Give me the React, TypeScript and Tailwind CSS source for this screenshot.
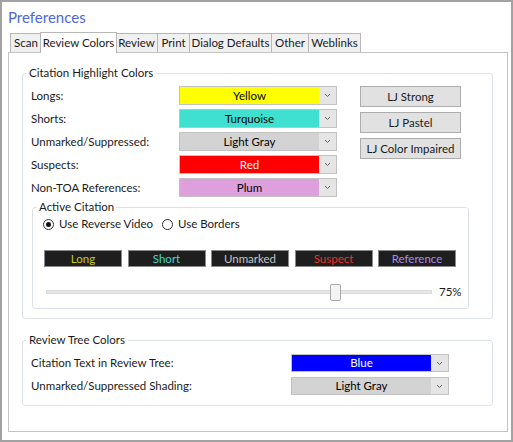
import type { JSX } from 'react'

const font = { fontFamily: '"Segoe UI", Lato, "Noto Sans", sans-serif' }

type Tab = { name: string; w: string }
const tabs: Tab[] = [
  { name: 'Scan', w: 'w-[31px]' },
  { name: 'Review Colors', w: 'w-[77px]' },
  { name: 'Review', w: 'w-[41px]' },
  { name: 'Print', w: 'w-[32px]' },
  { name: 'Dialog Defaults', w: 'w-[82px]' },
  { name: 'Other', w: 'w-[37px]' },
  { name: 'Weblinks', w: 'w-[53px]' },
]

type Choice = { label: string; value: string; bg: string; fg: string }
const highlight: Choice[] = [
  { label: 'Longs:', value: 'Yellow', bg: 'bg-[#ffff00]', fg: 'text-black' },
  { label: 'Shorts:', value: 'Turquoise', bg: 'bg-[#40e0d0]', fg: 'text-black' },
  { label: 'Unmarked/Suppressed:', value: 'Light Gray', bg: 'bg-[#d3d3d3]', fg: 'text-black' },
  { label: 'Suspects:', value: 'Red', bg: 'bg-[#ff0000]', fg: 'text-white' },
  { label: 'Non-TOA References:', value: 'Plum', bg: 'bg-[#dda0dd]', fg: 'text-black' },
]

const swatches = [
  { name: 'Long', fg: 'text-[#c9c912]' },
  { name: 'Short', fg: 'text-[#3fd8c8]' },
  { name: 'Unmarked', fg: 'text-[#c4c4c4]' },
  { name: 'Suspect', fg: 'text-[#e8302c]' },
  { name: 'Reference', fg: 'text-[#a98ee6]' },
]

function Chevron(): JSX.Element {
  return (
    <svg width="7" height="5" viewBox="0 0 7 5" fill="none">
      <path d="M1 1l2.5 2.5L6 1" stroke="#606060" strokeWidth="1" />
    </svg>
  )
}

function ColorSelect({ value, bg, fg, h = 'h-[19px]' }: { value: string; bg: string; fg: string; h?: string }): JSX.Element {
  return (
    <div className={`flex w-[158px] ${h} border border-[#c2c2c2] bg-[#e5e5e5]`}>
      <div className={`flex-1 flex items-center justify-center ${bg} ${fg} leading-none`}>{value}</div>
      <div className="w-[17px] flex items-center justify-center">
        <Chevron />
      </div>
    </div>
  )
}

function Radio({ checked, label }: { checked: boolean; label: string }): JSX.Element {
  return (
    <div className="flex items-center gap-[5px]">
      <span className="w-[11px] h-[11px] rounded-full border border-[#333] bg-white flex items-center justify-center">
        {checked && <span className="w-[5px] h-[5px] rounded-full bg-[#111]" />}
      </span>
      <span>{label}</span>
    </div>
  )
}

export default function App(): JSX.Element {
  return (
    <div
      className="w-[513px] h-[442px] bg-white border-2 border-[#a2a2a2] text-[11.5px] leading-4 text-[#1a1a1a] overflow-hidden whitespace-nowrap"
      style={font}
    >
      {/* Title */}
      <div className="pt-[4px] pl-[6px] h-[27px] text-[15px] leading-[22px] text-[#4f67d8]">Preferences</div>

      {/* Tabs */}
      <div className="flex items-end h-[21px] ml-[8px] mt-[3px]">
        {tabs.map((t, i) => {
          const active = t.name === 'Review Colors'
          const prevActive = i > 0 && tabs[i - 1].name === 'Review Colors'
          return (
            <div
              key={t.name}
              className={`${t.w} flex items-center justify-center border-t border-[#b7b7b7] ${
                active
                  ? 'relative z-10 h-[21px] bg-white border-l border-r -mx-[1px] px-[1px]'
                  : `h-[19px] mb-[1px] bg-[#f0f0f0] ${prevActive ? '' : 'border-l'} ${i === tabs.length - 1 ? 'border-r' : ''}`
              }`}
            >
              {t.name}
            </div>
          )
        })}
      </div>

      {/* Panel */}
      <div className="ml-[6px] -mt-[1px] w-[500px] h-[380px] border border-[#c4c4c4] pt-[12px] pl-[13px]">
        {/* Citation Highlight Colors */}
        <fieldset className="w-[471px] border border-[#dde2e8] rounded-[3px] pb-[9px]">
          <legend className="ml-[3px] px-[3px]">Citation Highlight Colors</legend>
          <div className="flex pt-[5px] pl-[8px]">
            <div className="flex flex-col gap-[4px]">
              {highlight.map(c => (
                <div key={c.label} className="flex items-center h-[19px]">
                  <div className="w-[148px]">{c.label}</div>
                  <ColorSelect value={c.value} bg={c.bg} fg={c.fg} />
                </div>
              ))}
            </div>
            <div className="ml-[23px] flex flex-col gap-[5px]">
              {['LJ Strong', 'LJ Pastel', 'LJ Color Impaired'].map(b => (
                <button
                  key={b}
                  className="w-[101px] h-[21px] bg-[#e1e1e1] border border-[#adadad] flex items-center justify-center"
                >
                  {b}
                </button>
              ))}
            </div>
          </div>

          {/* Active Citation */}
          <fieldset className="ml-[9px] mt-[2px] w-[437px] border border-[#dde2e8] rounded-[3px] pb-[8px]">
            <legend className="ml-[4px] px-[2px]">Active Citation</legend>
            <div className="flex items-center h-[16px] mt-[1px] pl-[10px]">
              <div className="w-[119px]">
                <Radio checked label="Use Reverse Video" />
              </div>
              <Radio checked={false} label="Use Borders" />
            </div>
            <div className="flex gap-[5.5px] mt-[18px] pl-[11px]">
              {swatches.map(s => (
                <div
                  key={s.name}
                  className={`w-[78px] h-[17px] bg-[#1e1e1e] border border-[#8a8a8a] flex items-center justify-center ${s.fg}`}
                >
                  {s.name}
                </div>
              ))}
            </div>
            <div className="flex items-center h-[16px] mt-[17px] pl-[13px]">
              <div className="relative w-[386px] h-[4px] bg-[#e7e7e7] border border-[#dadada]">
                <div className="absolute left-[283px] -top-[7px] w-[11px] h-[17px] bg-[#f3f3f3] border border-[#a9a9a9] rounded-[2px]" />
              </div>
              <div className="ml-[7px]">75%</div>
            </div>
          </fieldset>
        </fieldset>

        {/* Review Tree Colors */}
        <fieldset className="mt-[13px] w-[471px] border border-[#dde2e8] rounded-[3px] pb-[10px]">
          <legend className="ml-[3px] px-[3px]">Review Tree Colors</legend>
          <div className="flex flex-col gap-[5px] pt-[6px] pl-[8px]">
            <div className="flex items-center">
              <div className="w-[260px]">Citation Text in Review Tree:</div>
              <ColorSelect value="Blue" bg="bg-[#0000ff]" fg="text-white" h="h-[18px]" />
            </div>
            <div className="flex items-center">
              <div className="w-[260px]">Unmarked/Suppressed Shading:</div>
              <ColorSelect value="Light Gray" bg="bg-[#d3d3d3]" fg="text-black" h="h-[18px]" />
            </div>
          </div>
        </fieldset>
      </div>
    </div>
  )
}
